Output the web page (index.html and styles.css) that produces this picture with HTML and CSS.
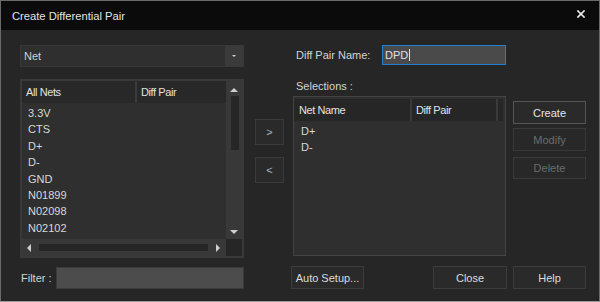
FILE: index.html
```html
<!DOCTYPE html>
<html>
<head>
<meta charset="utf-8">
<link rel="stylesheet" href="styles.css">
</head>
<body>
<div class="window">
  <div class="titlebar">
    <span class="title">Create Differential Pair</span>
    <svg class="close-x" width="8" height="8" viewBox="0 0 8 8"><path d="M1 1 L7 7 M7 1 L1 7" stroke="#f0f0f0" stroke-width="1.6" stroke-linecap="square"/></svg>
  </div>
  <div class="body">
    <div class="top">
      <div class="left">
        <div class="combo">
          <span class="combo-text">Net</span>
          <span class="combo-btn"><span class="tri-down small"></span></span>
        </div>
        <div class="listbox">
          <div class="lb-main">
            <div class="hdr">
              <div class="hcell c1">All Nets</div>
              <div class="hcell c2">Diff Pair</div>
            </div>
            <div class="items">
              <div class="item">3.3V</div>
              <div class="item">CTS</div>
              <div class="item">D+</div>
              <div class="item">D-</div>
              <div class="item">GND</div>
              <div class="item">N01899</div>
              <div class="item">N02098</div>
              <div class="item">N02102</div>
            </div>
          </div>
          <div class="vscroll">
            <span class="tri-up"></span>
            <span class="vthumb"></span>
            <span class="tri-down"></span>
          </div>
          <div class="hscroll">
            <span class="tri-left"></span>
            <span class="hthumb"></span>
            <span class="tri-right"></span>
          </div>
          <div class="corner"></div>
        </div>
      </div>
      <div class="mid">
        <div class="arrow-btn">&gt;</div>
        <div class="arrow-btn">&lt;</div>
      </div>
      <div class="right">
        <div class="name-row">
          <span class="label">Diff Pair Name:</span>
          <div class="name-input">DPD<span class="caret"></span></div>
        </div>
        <div class="sel-label">Selections :</div>
        <div class="sel-list">
          <div class="hdr sel-hdr">
            <div class="hcell s1">Net Name</div>
            <div class="hcell s2">Diff Pair</div>
            <div class="hcell s3"></div>
          </div>
          <div class="items sel-items">
            <div class="item">D+</div>
            <div class="item">D-</div>
          </div>
        </div>
      </div>
      <div class="btncol">
        <div class="btn default">Create</div>
        <div class="btn disabled b-modify">Modify</div>
        <div class="btn disabled b-delete">Delete</div>
      </div>
    </div>
    <div class="bottom">
      <div class="filter">
        <span class="label">Filter :</span>
        <div class="filter-input"></div>
      </div>
      <div class="btn b-auto">Auto Setup...</div>
      <div class="btn b-close">Close</div>
      <div class="btn b-help">Help</div>
    </div>
  </div>
</div>
</body>
</html>
```

FILE: styles.css
```css
* { box-sizing: border-box; }
html, body { margin: 0; padding: 0; background: #262626; }
body {
  font-family: "Liberation Sans", Arial, sans-serif;
  font-size: 11px;
  color: #d6d6d6;
}
.window {
  width: 600px;
  height: 302px;
  border: 1px solid #6a6a6a;
  border-bottom-color: #9a9a9a;
  background: #262626;
  display: flex;
  flex-direction: column;
}
.titlebar {
  height: 29px;
  background: #0b0b0b;
  display: flex;
  align-items: center;
  padding-left: 11px;
  padding-right: 14px;
}
.title {
  font-size: 11.2px;
  color: #e4e4e4;
  flex: 1;
  padding-top: 1px;
}
.close-x { margin-top: -4px; }

.body {
  padding: 15px 0 0 19px;
  display: flex;
  flex-direction: column;
}
.top {
  display: flex;
  height: 213px;
}
.left {
  width: 224px;
  display: flex;
  flex-direction: column;
}
.combo {
  height: 22px;
  border: 1px solid #383838;
  background: #2f2f2f;
  display: flex;
  align-items: center;
}
.combo-text {
  flex: 1;
  padding-left: 3px;
  color: #d0d0d0;
  font-size: 11px;
}
.combo-btn {
  width: 18px;
  height: 100%;
  background: #3a3a3a;
  display: flex;
  align-items: center;
  justify-content: center;
}
.tri-down, .tri-up, .tri-left, .tri-right {
  width: 0; height: 0; display: block;
}
.tri-down { border-left: 4px solid transparent; border-right: 4px solid transparent; border-top: 4px solid #cfcfcf; }
.tri-down.small { border-left-width: 2px; border-right-width: 2px; border-top-width: 2px; }
.tri-up { border-left: 4px solid transparent; border-right: 4px solid transparent; border-bottom: 4px solid #cfcfcf; }
.tri-left { border-top: 4px solid transparent; border-bottom: 4px solid transparent; border-right: 4px solid #cfcfcf; }
.tri-right { border-top: 4px solid transparent; border-bottom: 4px solid transparent; border-left: 4px solid #cfcfcf; }

.listbox {
  margin-top: 12px;
  height: 179px;
  border: 2px solid #393939;
  background: #2f2f2f;
  display: grid;
  grid-template-columns: 1fr 16px;
  grid-template-rows: 1fr 17px;
}
.lb-main { overflow: hidden; }
.hdr {
  height: 22px;
  display: flex;
  background: #282828;
}
.hcell {
  height: 100%;
  display: flex;
  align-items: center;
  color: #e2e2e2;
  font-size: 11px;
  letter-spacing: -0.4px;
}
.c1 { width: 115px; padding-left: 4px; border-right: 2px solid #3a3a3a; }
.c2 { flex: 1; padding-left: 4px; }
.items { padding-top: 2px; }
.item {
  height: 16.4px;
  line-height: 16.4px;
  padding-left: 6px;
  font-size: 11px;
  color: #d8d8d8;
}
.vscroll {
  background: #383838;
  display: flex;
  flex-direction: column;
  align-items: center;
  padding: 7px 0 5px;
}
.vthumb {
  width: 8px;
  height: 54px;
  background: #262626;
  margin-top: 4px;
  margin-left: 1px;
}
.vscroll .tri-down { margin-top: auto; }
.hscroll {
  background: #383838;
  display: flex;
  align-items: center;
  padding: 0 6px 0 5px;
}
.hthumb {
  flex: 1;
  height: 7px;
  background: #262626;
  margin: 0 8px 0 8px;
}
.corner { background: #262626; }

.mid {
  width: 29px;
  margin-left: 11px;
  padding-top: 74px;
  display: flex;
  flex-direction: column;
  gap: 12px;
}
.arrow-btn {
  height: 26px;
  border: 1px solid #3a3a3a;
  background: #2a2a2a;
  color: #a7b4c6;
  font-size: 11px;
  display: flex;
  align-items: center;
  justify-content: center;
}

.right {
  width: 215px;
  margin-left: 7px;
  display: flex;
  flex-direction: column;
}
.name-row {
  height: 20px;
  display: flex;
  align-items: center;
}
.label { color: #d4d4d4; font-size: 11px; }
.name-row .label { padding-left: 5px; }
.name-input {
  margin-left: auto;
  width: 124px;
  height: 20px;
  border: 1px solid #1f80d2;
  background: #4a4a4a;
  color: #e0e0e0;
  font-size: 11px;
  display: flex;
  align-items: center;
  padding-left: 2px;
}
.caret { width: 1px; height: 12px; background: #e0e0e0; margin-left: 1px; }
.sel-label {
  margin-top: 14px;
  height: 14px;
  line-height: 14px;
  padding-left: 5px;
  font-size: 11px;
  color: #d4d4d4;
}
.sel-list {
  margin-top: 3px;
  margin-left: 2px;
  width: 213px;
  height: 160px;
  border: 1px solid #434343;
  background: #2f2f2f;
  padding: 2px 2px 0 0;
}
.sel-hdr { background: #262626; }
.s1 { width: 118px; padding-left: 5px; border-right: 2px solid #3a3a3a; }
.s2 { width: 86px; padding-left: 4px; border-right: 2px solid #3a3a3a; }
.s3 { flex: 1; }
.sel-items .item { padding-left: 7px; }

.btncol {
  width: 73px;
  margin-left: 7px;
  padding-top: 56px;
  display: flex;
  flex-direction: column;
}
.btn {
  height: 23px;
  border: 1px solid #3c3c3c;
  background: #2a2a2a;
  color: #dcdcdc;
  font-size: 11px;
  display: flex;
  align-items: center;
  justify-content: center;
}
.btn.default { border-color: #555555; color: #e6e6e6; }
.btn.disabled { color: #6c6c6c; background: #282828; border-color: #393939; }
.b-modify { margin-top: 4px; }
.b-delete { margin-top: 6px; height: 22px; }

.bottom {
  display: flex;
  margin-top: 8px;
  height: 23px;
  align-items: center;
}
.filter {
  width: 224px;
  display: flex;
  align-items: center;
}
.filter .label { padding-left: 1px; }
.filter-input {
  margin-left: auto;
  width: 188px;
  height: 22px;
  border: 1px solid #3a3a3a;
  background: #4c4c4c;
}
.b-auto { margin-left: 47px; width: 73px; }
.b-close { margin-left: 69px; width: 74px; }
.b-help { margin-left: 6px; width: 73px; }
```
